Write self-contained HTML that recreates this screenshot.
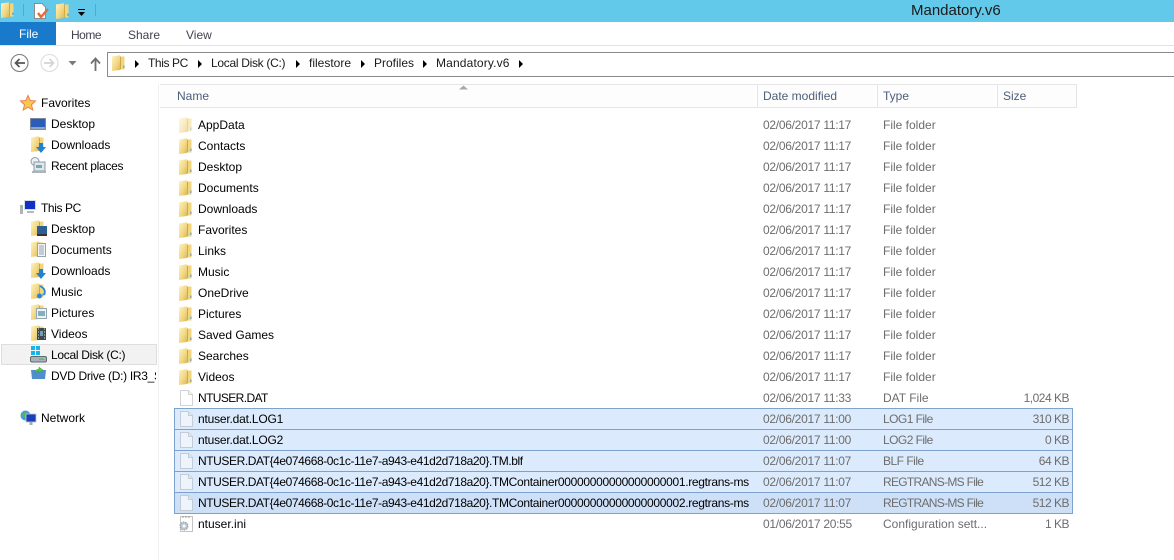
<!DOCTYPE html>
<html><head><meta charset="utf-8"><title>Mandatory.v6</title>
<style>
html,body{margin:0;padding:0;background:#fff;}
body{width:1174px;height:560px;overflow:hidden;position:relative;font-family:"Liberation Sans",sans-serif;font-size:12px;color:#000;}
.a{position:absolute;white-space:nowrap;}
.t{position:absolute;white-space:nowrap;line-height:16px;height:16px;}
.n{left:198px;max-width:552px;overflow:hidden;}
.d{left:763px;color:#6d6d6d;letter-spacing:-.28px;}
.y{left:883px;color:#6d6d6d;}
.s{right:105px;color:#6d6d6d;letter-spacing:-.5px;}
.h{color:#4c607a;top:88px;}
.r{position:absolute;left:174px;width:897px;height:20px;background:#dbeafc;border:1px solid #7da2ce;}
.l1{letter-spacing:-.42px}.l2{letter-spacing:-.31px}
svg{position:absolute;overflow:visible;}
.b{left:51px}.c{left:41px}
</style></head><body>
<svg width="0" height="0" style="position:absolute">
<defs>
<linearGradient id="fg" x1="0" y1="0" x2="1" y2="1"><stop offset="0" stop-color="#fff3bf"/><stop offset=".6" stop-color="#f0d681"/><stop offset="1" stop-color="#d9b65a"/></linearGradient>
<symbol id="folder" viewBox="0 0 13 16">
<path d="M7 1.500H12.500V14.500H7Z" fill="#f3d67c"/>
<path d="M7.500 1.500H9V14.500H7.500Z" fill="#cfa948"/>
<rect x="11.300" y="10.500" width="1.200" height="2.500" fill="#4da3dd"/>
<path d="M0 1.500L8 .3V15L0 16Z" fill="url(#fg)"/>
</symbol>
<symbol id="file" viewBox="0 0 13 16">
<path d="M.5 .5H8.500L12.500 4.500V15.500H.5Z" fill="#fff" stroke="#d4d4d4"/>
<path d="M8.500 .5V4.500H12.500" fill="#f2f2f2" stroke="#d4d4d4"/>
</symbol>
<symbol id="filesel" viewBox="0 0 13 16">
<path d="M.5 .5H8.500L12.500 4.500V15.500H.5Z" fill="#edf4fc" stroke="#c3ccd6"/>
<path d="M8.500 .5V4.500H12.500" fill="#dfe8f2" stroke="#c3ccd6"/>
</symbol>
</defs></svg>

<!-- title bar -->
<div class="a" style="left:0;top:0;width:1174px;height:22px;background:#63c9ea"></div>
<svg style="left:1px;top:2px" width="13" height="16"><use href="#folder" width="13" height="16"/></svg>
<div class="a" style="left:23px;top:4px;width:1px;height:12px;background:#6f9fb3"></div>
<svg style="left:34px;top:3px" width="15" height="16" viewBox="0 0 15 16"><path d="M.5 .5H8L11.500 4V15.500H.5Z" fill="#fff" stroke="#8c8c8c"/><path d="M4 10L7 14L14 6" fill="none" stroke="#e9683a" stroke-width="2.400"/></svg>
<svg style="left:56px;top:3px" width="13" height="16"><use href="#folder" width="13" height="16"/></svg>
<svg style="left:77px;top:8px" width="9" height="9" viewBox="0 0 9 9"><rect x="1" y="1" width="7" height="1" fill="#000"/><path d="M1 4H8L4.500 8Z" fill="#000"/></svg>
<div class="a" style="left:95px;top:4px;width:1px;height:12px;background:#6f9fb3"></div>
<div class="t" style="left:911px;top:3px;font-size:15px;color:#1a1a1a">Mandatory.v6</div>

<!-- ribbon tabs -->
<div class="a" style="left:0;top:22px;width:56px;height:23px;background:#1979ca"></div>
<div class="t" style="left:19px;top:26px;color:#fff">File</div>
<div class="t" style="left:71px;top:27px;color:#444050;letter-spacing:-.5px">Home</div>
<div class="t" style="left:128px;top:27px;color:#444050">Share</div>
<div class="t" style="left:186px;top:27px;color:#444050">View</div>
<div class="a" style="left:0;top:45px;width:1174px;height:1px;background:#e3e3e3"></div>

<!-- nav buttons -->
<svg style="left:10px;top:53px" width="20" height="20" viewBox="0 0 20 20"><circle cx="9.500" cy="10" r="8.500" fill="#fff" stroke="#7b7b7b" stroke-width="1.100"/><path d="M15 10H6M9.500 6L5.500 10L9.500 14" fill="none" stroke="#555" stroke-width="1.700"/></svg>
<svg style="left:40px;top:53px" width="20" height="20" viewBox="0 0 20 20"><circle cx="9.500" cy="10" r="8.500" fill="#fff" stroke="#dcdcdc" stroke-width="1.100"/><path d="M4 10H13M9.500 6L13.500 10L9.500 14" fill="none" stroke="#d4d4d4" stroke-width="1.700"/></svg>
<svg style="left:68px;top:61px" width="9" height="5" viewBox="0 0 9 5"><path d="M.5 0H8.500L4.500 4.500Z" fill="#7b7b7b"/></svg>
<svg style="left:90px;top:57px" width="11" height="14" viewBox="0 0 11 14"><path d="M5.500 14V2M1 6.500L5.500 1.500L10 6.500" fill="none" stroke="#6f6f6f" stroke-width="1.800"/></svg>

<!-- address bar -->
<div class="a" style="left:107px;top:52px;width:1067px;height:23px;border:1px solid #8a8a8a;border-right:0;background:#fff"></div>
<svg style="left:112px;top:55px" width="13" height="16"><use href="#folder" width="13" height="16"/></svg>
<svg style="left:0;top:0" width="1174" height="80">
<path d="M135 60L139 64L135 68Z M198 60L202 64L198 68Z M296 60L300 64L296 68Z M361 60L365 64L361 68Z M423 60L427 64L423 68Z M519 60L523 64L519 68Z" fill="#000"/></svg>
<div class="t" style="left:148px;top:55px;color:#1a1a1a;letter-spacing:-.4px">This PC</div>
<div class="t" style="left:211px;top:55px;color:#1a1a1a;letter-spacing:-.3px">Local Disk (C:)</div>
<div class="t" style="left:309px;top:55px;color:#1a1a1a">filestore</div>
<div class="t" style="left:374px;top:55px;color:#1a1a1a">Profiles</div>
<div class="t" style="left:436px;top:55px;color:#1a1a1a;letter-spacing:.15px">Mandatory.v6</div>

<!-- sidebar -->
<div class="a" style="left:158px;top:84px;width:1px;height:476px;background:#f0f0f0"></div>
<div class="a" style="left:1px;top:344px;width:154px;height:19px;background:#f2f2f2;border:1px solid #dedede"></div>

<svg style="left:20px;top:95px" width="16" height="16" viewBox="0 0 16 16"><path d="M8 .5L10.200 5.500L15.500 6L11.500 9.700L12.800 15L8 12.200L3.200 15L4.500 9.700L.5 6L5.800 5.500Z" fill="#fbc64f" stroke="#e8824a"/></svg>
<div class="t c" style="top:95px">Favorites</div>
<svg style="left:30px;top:118px" width="16" height="12" viewBox="0 0 16 12"><rect x=".5" y=".5" width="15" height="11" fill="#2a5cb8" stroke="#7a8aa0"/><rect x="1" y="9" width="14" height="2" fill="#8fa4bd"/></svg>
<div class="t b" style="top:116px">Desktop</div>
<svg style="left:31px;top:136px" width="13" height="16"><use href="#folder" width="13" height="16"/></svg>
<svg style="left:36px;top:143px" width="10" height="10" viewBox="0 0 10 10"><path d="M3 0H7V4H10L5 10L0 4H3Z" fill="#1f80d8"/></svg>
<div class="t b" style="top:137px">Downloads</div>
<svg style="left:30px;top:157px" width="16" height="17" viewBox="0 0 16 17"><circle cx="5" cy="4.500" r="4" fill="#eef2f4" stroke="#8d9aa2"/><rect x="4" y="5" width="11" height="9" fill="#dfe7ea" stroke="#8d9aa2"/><rect x="6" y="8" width="6" height="3" fill="#69aebf"/><rect x="2" y="14" width="14" height="2" fill="#aab4ba"/></svg>
<div class="t b" style="top:158px;letter-spacing:-.3px">Recent places</div>

<svg style="left:20px;top:200px" width="16" height="15" viewBox="0 0 16 15"><rect x="0" y="5" width="3" height="9" fill="#aeb4b8"/><rect x=".8" y="6" width="1.400" height="1.500" fill="#5fcf5f"/><rect x="4" y="0" width="12" height="10" fill="#d6dde3"/><rect x="5" y="1" width="10" height="8" fill="#1230c4"/><rect x="7" y="11" width="7" height="2" fill="#b3bcc3"/></svg>
<div class="t c" style="top:200px;letter-spacing:-.4px">This PC</div>
<svg style="left:31px;top:220px" width="13" height="16"><use href="#folder" width="13" height="16"/></svg>
<svg style="left:37px;top:226px" width="10" height="10" viewBox="0 0 10 10"><rect width="10" height="8" fill="#2d5f94"/><rect y="8" width="10" height="2" fill="#333"/></svg>
<div class="t b" style="top:221px">Desktop</div>
<svg style="left:31px;top:241px" width="13" height="16"><use href="#folder" width="13" height="16"/></svg>
<svg style="left:37px;top:243px" width="9" height="14" viewBox="0 0 9 14"><rect x=".5" y=".5" width="8" height="13" fill="#f4f6f8" stroke="#98a2ab"/><path d="M2 3H7M2 5H7M2 7H7M2 9H7M2 11H7" stroke="#8da2b4"/></svg>
<div class="t b" style="top:242px">Documents</div>
<svg style="left:31px;top:262px" width="13" height="16"><use href="#folder" width="13" height="16"/></svg>
<svg style="left:36px;top:269px" width="10" height="10" viewBox="0 0 10 10"><path d="M3 0H7V4H10L5 10L0 4H3Z" fill="#1f80d8"/></svg>
<div class="t b" style="top:263px">Downloads</div>
<svg style="left:31px;top:283px" width="13" height="16"><use href="#folder" width="13" height="16"/></svg>
<svg style="left:37px;top:285px" width="9" height="14" viewBox="0 0 9 14"><path d="M3 1C7 3 9 6 7 10" fill="none" stroke="#2d85cf" stroke-width="1.800"/><ellipse cx="2.500" cy="11" rx="2.500" ry="2.500" fill="#2d85cf"/></svg>
<div class="t b" style="top:284px">Music</div>
<svg style="left:31px;top:304px" width="13" height="16"><use href="#folder" width="13" height="16"/></svg>
<svg style="left:36px;top:308px" width="11" height="11" viewBox="0 0 11 11"><rect x=".5" y=".5" width="10" height="10" fill="#eef3f5" stroke="#9aa6ad"/><rect x="2" y="3" width="7" height="5" fill="#7fb1bf"/></svg>
<div class="t b" style="top:305px">Pictures</div>
<svg style="left:31px;top:325px" width="13" height="16"><use href="#folder" width="13" height="16"/></svg>
<svg style="left:37px;top:328px" width="9" height="12" viewBox="0 0 9 12"><rect width="9" height="12" fill="#3b4a50"/><path d="M1 1H2M1 4H2M1 7H2M1 10H2M7 1H8M7 4H8M7 7H8M7 10H8" stroke="#ddd"/><rect x="3" y="3" width="3" height="5" fill="#6ea0b0"/></svg>
<div class="t b" style="top:326px">Videos</div>
<svg style="left:30px;top:346px" width="17" height="17" viewBox="0 0 17 17"><path d="M1 0H5V4H1ZM6 0H10V4H6ZM1 5H5V9H1ZM6 5H10V9H6Z" fill="#13b5ea"/><rect x=".5" y="10.500" width="16" height="5.500" rx="1.500" fill="#a8b2b8" stroke="#5d6a70"/><rect x="9" y="12.500" width="5" height="1.500" fill="#4fc850"/></svg>
<div class="t b" style="top:347px;letter-spacing:-.3px">Local Disk (C:)</div>
<svg style="left:31px;top:366px" width="15" height="14" viewBox="0 0 15 14"><path d="M0 4H15L14 13H1Z" fill="#4f8fcf"/><path d="M8 1L12 4L8 7V5C6 5 5 6 4 9C4 5 5 3 8 3Z" fill="#4fcb3f" stroke="#2f9c2a" stroke-width=".4"/></svg>
<div class="a" style="left:51px;top:368px;width:105px;overflow:hidden;line-height:16px;letter-spacing:-.3px">DVD Drive (D:) IR3_SSS</div>
<svg style="left:20px;top:410px" width="16" height="16" viewBox="0 0 16 16"><circle cx="5.500" cy="5.500" r="5" fill="#3f9fd8"/><path d="M2 3L6 2L7 5L4 8Z" fill="#56b84a"/><rect x="6" y="4" width="10" height="8" fill="#1a3fb8" stroke="#c4ccd2" stroke-width=".8"/><rect x="9.500" y="12" width="3" height="3" fill="#a3adb3"/></svg>
<div class="t c" style="top:410px">Network</div>

<!-- header -->
<div class="a" style="left:160px;top:84px;width:917px;height:22px;background:#fdfdfd;border-top:1px solid #e5e5e5;border-bottom:1px solid #e5e5e5"></div>
<div class="a" style="left:757px;top:84px;width:1px;height:23px;background:#e5e5e5"></div>
<div class="a" style="left:877px;top:84px;width:1px;height:23px;background:#e5e5e5"></div>
<div class="a" style="left:997px;top:84px;width:1px;height:23px;background:#e5e5e5"></div>
<div class="a" style="left:1076px;top:84px;width:1px;height:23px;background:#e5e5e5"></div>
<svg style="left:459px;top:85px" width="9" height="5" viewBox="0 0 9 5"><path d="M0 4.500L4.500 .5L9 4.500Z" fill="#a8a8a8"/></svg>
<div class="t h" style="left:177px">Name</div>
<div class="t h" style="left:763px">Date modified</div>
<div class="t h" style="left:883px">Type</div>
<div class="t h" style="left:1003px">Size</div>

<!-- selection -->
<div class="r" style="top:408px"></div>
<div class="r" style="top:429px"></div>
<div class="r" style="top:450px"></div>
<div class="r" style="top:471px"></div>
<div class="r" style="top:492px;background:#cde0f8"></div>

<!-- folder rows -->
<svg style="left:179px;top:117px;opacity:.5" width="13" height="16"><use href="#folder" width="13" height="16"/></svg>
<div class="t n" style="top:117px">AppData</div><div class="t d" style="top:117px">02/06/2017 11:17</div><div class="t y" style="top:117px">File folder</div>
<svg style="left:179px;top:138px" width="13" height="16"><use href="#folder" width="13" height="16"/></svg>
<div class="t n" style="top:138px">Contacts</div><div class="t d" style="top:138px">02/06/2017 11:17</div><div class="t y" style="top:138px">File folder</div>
<svg style="left:179px;top:159px" width="13" height="16"><use href="#folder" width="13" height="16"/></svg>
<div class="t n" style="top:159px">Desktop</div><div class="t d" style="top:159px">02/06/2017 11:17</div><div class="t y" style="top:159px">File folder</div>
<svg style="left:179px;top:180px" width="13" height="16"><use href="#folder" width="13" height="16"/></svg>
<div class="t n" style="top:180px">Documents</div><div class="t d" style="top:180px">02/06/2017 11:17</div><div class="t y" style="top:180px">File folder</div>
<svg style="left:179px;top:201px" width="13" height="16"><use href="#folder" width="13" height="16"/></svg>
<div class="t n" style="top:201px">Downloads</div><div class="t d" style="top:201px">02/06/2017 11:17</div><div class="t y" style="top:201px">File folder</div>
<svg style="left:179px;top:222px" width="13" height="16"><use href="#folder" width="13" height="16"/></svg>
<div class="t n" style="top:222px">Favorites</div><div class="t d" style="top:222px">02/06/2017 11:17</div><div class="t y" style="top:222px">File folder</div>
<svg style="left:179px;top:243px" width="13" height="16"><use href="#folder" width="13" height="16"/></svg>
<div class="t n" style="top:243px">Links</div><div class="t d" style="top:243px">02/06/2017 11:17</div><div class="t y" style="top:243px">File folder</div>
<svg style="left:179px;top:264px" width="13" height="16"><use href="#folder" width="13" height="16"/></svg>
<div class="t n" style="top:264px">Music</div><div class="t d" style="top:264px">02/06/2017 11:17</div><div class="t y" style="top:264px">File folder</div>
<svg style="left:179px;top:285px" width="13" height="16"><use href="#folder" width="13" height="16"/></svg>
<div class="t n" style="top:285px">OneDrive</div><div class="t d" style="top:285px">02/06/2017 11:17</div><div class="t y" style="top:285px">File folder</div>
<svg style="left:179px;top:306px" width="13" height="16"><use href="#folder" width="13" height="16"/></svg>
<div class="t n" style="top:306px">Pictures</div><div class="t d" style="top:306px">02/06/2017 11:17</div><div class="t y" style="top:306px">File folder</div>
<svg style="left:179px;top:327px" width="13" height="16"><use href="#folder" width="13" height="16"/></svg>
<div class="t n" style="top:327px">Saved Games</div><div class="t d" style="top:327px">02/06/2017 11:17</div><div class="t y" style="top:327px">File folder</div>
<svg style="left:179px;top:348px" width="13" height="16"><use href="#folder" width="13" height="16"/></svg>
<div class="t n" style="top:348px">Searches</div><div class="t d" style="top:348px">02/06/2017 11:17</div><div class="t y" style="top:348px">File folder</div>
<svg style="left:179px;top:369px" width="13" height="16"><use href="#folder" width="13" height="16"/></svg>
<div class="t n" style="top:369px">Videos</div><div class="t d" style="top:369px">02/06/2017 11:17</div><div class="t y" style="top:369px">File folder</div>

<!-- file rows -->
<svg style="left:180px;top:390px" width="13" height="16"><use href="#file" width="13" height="16"/></svg>
<div class="t n" style="top:390px;letter-spacing:-.6px">NTUSER.DAT</div><div class="t d" style="top:390px">02/06/2017 11:33</div><div class="t y" style="top:390px">DAT File</div><div class="t s" style="top:390px">1,024 KB</div>
<svg style="left:180px;top:411px" width="13" height="16"><use href="#filesel" width="13" height="16"/></svg>
<div class="t n" style="top:411px;letter-spacing:-.2px">ntuser.dat.LOG1</div><div class="t d" style="top:411px">02/06/2017 11:00</div><div class="t y" style="top:411px;letter-spacing:-.55px">LOG1 File</div><div class="t s" style="top:411px">310 KB</div>
<svg style="left:180px;top:432px" width="13" height="16"><use href="#filesel" width="13" height="16"/></svg>
<div class="t n" style="top:432px;letter-spacing:-.2px">ntuser.dat.LOG2</div><div class="t d" style="top:432px">02/06/2017 11:00</div><div class="t y" style="top:432px;letter-spacing:-.55px">LOG2 File</div><div class="t s" style="top:432px">0 KB</div>
<svg style="left:180px;top:453px" width="13" height="16"><use href="#filesel" width="13" height="16"/></svg>
<div class="t n" style="top:453px"><span class="l1">NTUSER.DAT{4e074668-0c1c-11e7-a943-e41d2d718a20}.TM.blf</span></div><div class="t d" style="top:453px">02/06/2017 11:07</div><div class="t y" style="top:453px;letter-spacing:-.5px">BLF File</div><div class="t s" style="top:453px">64 KB</div>
<svg style="left:180px;top:474px" width="13" height="16"><use href="#filesel" width="13" height="16"/></svg>
<div class="t n" style="top:474px"><span class="l1">NTUSER.DAT{4e074668-0c1c-11e7-a943-e41d2d718a20}</span><span class="l2">.TMContainer00000000000000000001.regtrans-ms</span></div><div class="t d" style="top:474px">02/06/2017 11:07</div><div class="t y" style="top:474px;letter-spacing:-.7px">REGTRANS-MS File</div><div class="t s" style="top:474px">512 KB</div>
<svg style="left:180px;top:495px" width="13" height="16"><use href="#filesel" width="13" height="16"/></svg>
<div class="t n" style="top:495px"><span class="l1">NTUSER.DAT{4e074668-0c1c-11e7-a943-e41d2d718a20}</span><span class="l2">.TMContainer00000000000000000002.regtrans-ms</span></div><div class="t d" style="top:495px">02/06/2017 11:07</div><div class="t y" style="top:495px;letter-spacing:-.7px">REGTRANS-MS File</div><div class="t s" style="top:495px">512 KB</div>
<svg style="left:178px;top:516px" width="15" height="16" viewBox="0 0 15 16"><path d="M2.500 .5H14.500V15.500H2.500Z" fill="#fff" stroke="#c4c4c4"/><path d="M5 0V2M8 0V2M11 0V2" stroke="#999"/><circle cx="6" cy="10" r="4" fill="#bcc6cc" stroke="#8d989f" stroke-dasharray="1.500 1"/><circle cx="6" cy="10" r="1.500" fill="#fff"/></svg>
<div class="t n" style="top:516px">ntuser.ini</div><div class="t d" style="top:516px">01/06/2017 20:55</div><div class="t y" style="top:516px">Configuration sett...</div><div class="t s" style="top:516px">1 KB</div>
</body></html>
